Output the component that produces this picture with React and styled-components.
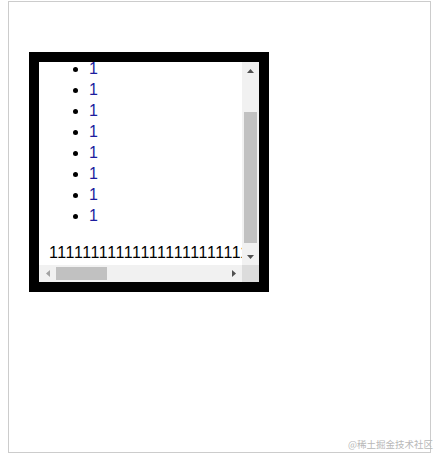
import React, { useLayoutEffect, useRef, useState } from "react";
import styled, { createGlobalStyle } from "styled-components";

const GlobalStyle = createGlobalStyle`
  html, body {
    margin: 0;
    padding: 0;
    background: #fff;
  }
  body {
    font-family: "Liberation Sans", Arial, sans-serif;
  }
`;

const Frame = styled.div`
  position: relative;
  box-sizing: border-box;
  margin: 1px 0 0 8px;
  width: 423px;
  height: 452px;
  border: 1px solid #cccccc;
  padding: 50px 0 0 20px;
`;

const Box = styled.div`
  display: grid;
  grid-template-columns: 203px 17px;
  grid-template-rows: 203px 17px;
  width: 220px;
  height: 220px;
  border: 10px solid #000;
  background: #fff;
`;

const Viewport = styled.div`
  box-sizing: border-box;
  width: 203px;
  height: 203px;
  overflow: hidden;
  padding: 10px;
  font-size: 16px;
  line-height: 21px;
  color: #000;
`;

const Bar = styled.div`
  display: flex;
  flex-direction: ${(p) => (p.$vertical ? "column" : "row")};
  background: #f1f1f1;
`;

const ArrowBtn = styled.div`
  flex: none;
  width: 17px;
  height: 17px;
  display: flex;
  align-items: center;
  justify-content: center;
`;

const Track = styled.div`
  flex: 1;
  display: flex;
  flex-direction: ${(p) => (p.$vertical ? "column" : "row")};
  padding: ${(p) => (p.$vertical ? "0 2px" : "2px 0")};
`;

const Thumb = styled.div`
  flex: none;
  background: #c1c1c1;
  ${(p) => (p.$vertical ? "width: 13px;" : "height: 13px;")}
`;

const Corner = styled.div`
  background: #dcdcdc;
`;

const List = styled.ul`
  margin: 16px 0;
  padding-left: 40px;
  list-style: disc;
`;

const Item = styled.li`
  color: #000;
`;

const ItemText = styled.span`
  color: #1c1c9e;
`;

const LongRow = styled.div`
  white-space: nowrap;
  letter-spacing: 0.6px;
`;

const Watermark = styled.div`
  position: absolute;
  right: -3px;
  bottom: 2px;
  font-family: "Noto Sans CJK SC", "Liberation Sans", sans-serif;
  font-size: 9.5px;
  line-height: 12px;
  color: #b8b8b8;
  white-space: nowrap;
`;

const Arrow = ({ dir, color = "#505050" }) => {
  const pts = {
    up: "0,4 3.5,0 7,4",
    down: "0,0 3.5,4 7,0",
    left: "4,0 0,3.5 4,7",
    right: "0,0 4,3.5 0,7",
  }[dir];
  const vertical = dir === "up" || dir === "down";
  return (
    <svg width={vertical ? 7 : 4} height={vertical ? 4 : 7} viewBox={vertical ? "0 0 7 4" : "0 0 4 7"}>
      <polygon points={pts} fill={color} />
    </svg>
  );
};

const items = Array.from({ length: 9 }, () => "1");
const TRACK = 169;

export default function App() {
  const viewRef = useRef(null);
  const [thumbs, setThumbs] = useState({ vOff: 33, vLen: 131, hOff: 0, hLen: 49 });

  useLayoutEffect(() => {
    const el = viewRef.current;
    if (!el) return;
    el.scrollTop = 51;
    const vLen = Math.max(17, Math.round((TRACK * el.clientHeight) / el.scrollHeight));
    const hLen = Math.max(17, Math.round((TRACK * el.clientWidth) / el.scrollWidth));
    const vMax = el.scrollHeight - el.clientHeight;
    const hMax = el.scrollWidth - el.clientWidth;
    const vOff = vMax > 0 ? Math.round(((TRACK - vLen) * el.scrollTop) / vMax) : 0;
    const hOff = hMax > 0 ? Math.round(((TRACK - hLen) * el.scrollLeft) / hMax) : 0;
    setThumbs({ vOff, vLen, hOff, hLen });
  }, []);

  return (
    <>
      <GlobalStyle />
      <Frame>
        <Box>
          <Viewport ref={viewRef}>
            <List>
              {items.map((t, i) => (
                <Item key={i}>
                  <ItemText>{t}</ItemText>
                </Item>
              ))}
            </List>
            <LongRow>{"1".repeat(80)}</LongRow>
          </Viewport>
          <Bar $vertical>
            <ArrowBtn>
              <Arrow dir="up" />
            </ArrowBtn>
            <Track $vertical>
              <Thumb $vertical style={{ marginTop: thumbs.vOff, height: thumbs.vLen }} />
            </Track>
            <ArrowBtn>
              <Arrow dir="down" />
            </ArrowBtn>
          </Bar>
          <Bar>
            <ArrowBtn>
              <Arrow dir="left" color="#a3a3a3" />
            </ArrowBtn>
            <Track>
              <Thumb style={{ marginLeft: thumbs.hOff, width: thumbs.hLen }} />
            </Track>
            <ArrowBtn>
              <Arrow dir="right" />
            </ArrowBtn>
          </Bar>
          <Corner />
        </Box>
        <Watermark>@稀土掘金技术社区</Watermark>
      </Frame>
    </>
  );
}
